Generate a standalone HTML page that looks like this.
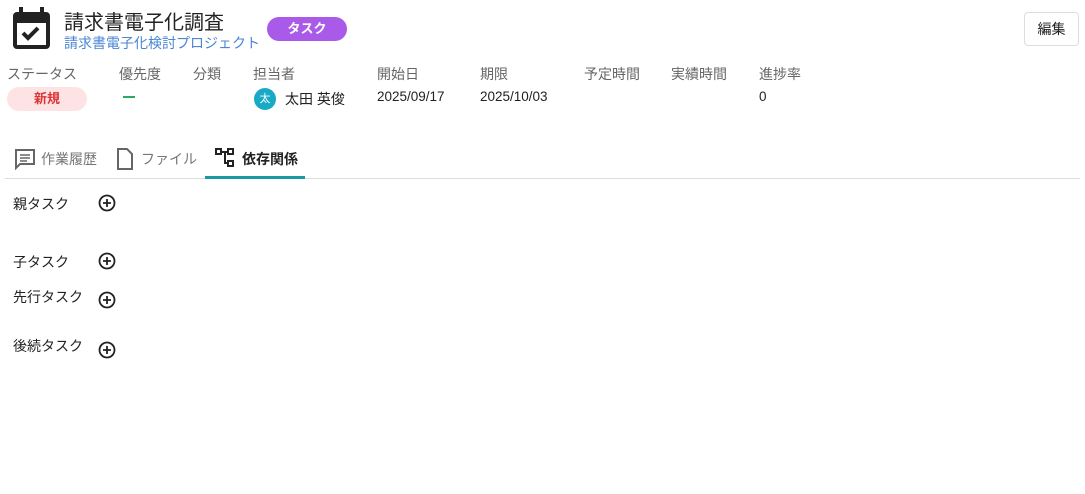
<!DOCTYPE html>
<html><head><meta charset="utf-8"><style>
body{margin:0;width:1085px;height:494px;background:#fff;font-family:"Liberation Sans","Noto Sans CJK JP",sans-serif;position:relative;overflow:hidden;color:#222}
.a{position:absolute;white-space:nowrap}
.lbl{font-size:14px;color:#666;top:64px}
.val{font-size:13.5px;color:#222;top:89px}
.sec{font-size:14px;color:#222;left:13px}
</style></head><body>
<svg class="a" style="left:11px;top:7px" width="41" height="43" viewBox="0 0 41 43">
<rect x="2" y="5" width="37" height="37" rx="4" fill="#222"/>
<rect x="8" y="0" width="4" height="8" fill="#222"/><rect x="29" y="0" width="4" height="8" fill="#222"/>
<rect x="6" y="16" width="29" height="22" fill="#fff"/>
<path d="M12 26l5 5 10-10" stroke="#222" stroke-width="4" fill="none"/>
</svg>
<div class="a" style="left:64px;top:6px;font-size:20px;color:#222">請求書電子化調査</div>
<div class="a" style="left:64px;top:33px;font-size:14px;color:#4a86d4">請求書電子化検討プロジェクト</div>
<div class="a" style="left:267px;top:17px;width:80px;height:24px;border-radius:12px;background:#a95ae8;color:#fff;font-size:13px;font-weight:bold;text-align:center;line-height:24px">タスク</div>
<div class="a" style="left:1024px;top:12px;width:53px;height:32px;border:1px solid #ddd;border-radius:4px;font-size:14px;text-align:center;line-height:32px">編集</div>

<div class="a lbl" style="left:7px">ステータス</div>
<div class="a lbl" style="left:119px">優先度</div>
<div class="a lbl" style="left:193px">分類</div>
<div class="a lbl" style="left:253px">担当者</div>
<div class="a lbl" style="left:377px">開始日</div>
<div class="a lbl" style="left:480px">期限</div>
<div class="a lbl" style="left:584px">予定時間</div>
<div class="a lbl" style="left:671px">実績時間</div>
<div class="a lbl" style="left:759px">進捗率</div>

<div class="a" style="left:7px;top:87px;width:80px;height:24px;border-radius:12px;background:#fde3e4;color:#d33;font-size:13px;font-weight:bold;text-align:center;line-height:24px">新規</div>
<div class="a" style="left:123px;top:96px;width:12px;height:2px;background:#2aa868"></div>
<div class="a" style="left:254px;top:88px;width:22px;height:22px;border-radius:50%;background:#17a9c6;color:#fff;font-size:11px;text-align:center;line-height:22px">太</div>
<div class="a" style="left:285px;top:89px;font-size:14px">太田 英俊</div>
<div class="a val" style="left:377px">2025/09/17</div>
<div class="a val" style="left:480px">2025/10/03</div>
<div class="a val" style="left:759px">0</div>

<svg class="a" style="left:14px;top:148px" width="22" height="22" viewBox="0 0 22 22">
<path d="M2 2h18v14H6l-4 4z" fill="none" stroke="#666" stroke-width="2"/>
<path d="M6 7h10M6 10h10M6 13h7" stroke="#666" stroke-width="1.6"/></svg>
<div class="a" style="left:41px;top:149px;font-size:14px;color:#777">作業履歴</div>
<svg class="a" style="left:116px;top:148px" width="18" height="22" viewBox="0 0 18 22">
<path d="M2 1h9l5 5v15H2z" fill="none" stroke="#666" stroke-width="2"/></svg>
<div class="a" style="left:141px;top:149px;font-size:14px;color:#777">ファイル</div>
<svg class="a" style="left:215px;top:148px" width="20" height="20" viewBox="0 0 20 20">
<g fill="none" stroke="#222" stroke-width="2"><rect x="1" y="1" width="5" height="5"/><rect x="13" y="1" width="5" height="5"/><rect x="13" y="13" width="5" height="5"/><path d="M6 4h7M10 4v11h3"/></g></svg>
<div class="a" style="left:242px;top:149px;font-size:14px;font-weight:bold;color:#222">依存関係</div>
<div class="a" style="left:5px;top:178px;width:1075px;height:1px;background:#ddd"></div>
<div class="a" style="left:205px;top:176px;width:100px;height:3px;background:#1a98a6"></div>

<div class="a sec" style="top:194px">親タスク</div>
<div class="a sec" style="top:252px">子タスク</div>
<div class="a sec" style="top:287px">先行タスク</div>
<div class="a sec" style="top:336px">後続タスク</div>
<svg class="a" style="left:98px;top:194px" width="18" height="18" viewBox="0 0 18 18"><circle cx="9" cy="9" r="7.5" fill="none" stroke="#222" stroke-width="1.8"/><path d="M9 5v8M5 9h8" stroke="#222" stroke-width="1.8"/></svg>
<svg class="a" style="left:98px;top:252px" width="18" height="18" viewBox="0 0 18 18"><circle cx="9" cy="9" r="7.5" fill="none" stroke="#222" stroke-width="1.8"/><path d="M9 5v8M5 9h8" stroke="#222" stroke-width="1.8"/></svg>
<svg class="a" style="left:98px;top:291px" width="18" height="18" viewBox="0 0 18 18"><circle cx="9" cy="9" r="7.5" fill="none" stroke="#222" stroke-width="1.8"/><path d="M9 5v8M5 9h8" stroke="#222" stroke-width="1.8"/></svg>
<svg class="a" style="left:98px;top:341px" width="18" height="18" viewBox="0 0 18 18"><circle cx="9" cy="9" r="7.5" fill="none" stroke="#222" stroke-width="1.8"/><path d="M9 5v8M5 9h8" stroke="#222" stroke-width="1.8"/></svg>
</body></html>
